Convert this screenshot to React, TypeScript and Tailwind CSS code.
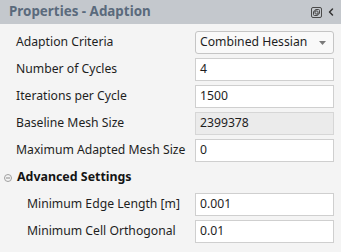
import { ChevronLeft } from "lucide-react";

type Row = { label: string; value: string; kind?: "select" | "disabled"; indent?: boolean };

const mainRows: Row[] = [
  { label: "Adaption Criteria", value: "Combined Hessian", kind: "select" },
  { label: "Number of Cycles", value: "4" },
  { label: "Iterations per Cycle", value: "1500" },
  { label: "Baseline Mesh Size", value: "2399378", kind: "disabled" },
  { label: "Maximum Adapted Mesh Size", value: "0" },
];

const advancedRows: Row[] = [
  { label: "Minimum Edge Length [m]", value: "0.001", indent: true },
  { label: "Minimum Cell Orthogonal", value: "0.01", indent: true },
];

const Field = ({ row }: { row: Row }) => (
  <div className="flex items-center h-[27px]">
    <div className={row.indent ? "pl-[27px] w-[195px]" : "pl-[16px] w-[195px]"}>
      <span className="text-[#1e1e1e]">{row.label}</span>
    </div>
    <div
      className={
        "flex items-center h-[23px] w-[139px] border pl-[4px] pr-[7px] " +
        (row.kind === "select"
          ? "border-[#c5c5c5] bg-[#f9f9f9] rounded-[3px] justify-between"
          : row.kind === "disabled"
          ? "border-[#d6d6d6] bg-[#ebebeb]"
          : "border-[#cfcfcf] bg-white")
      }
    >
      <span className="text-[#1e1e1e]">{row.value}</span>
      {row.kind === "select" && (
        <svg width="7" height="4" viewBox="0 0 7 4">
          <path d="M0 0 H7 L3.5 4 Z" fill="#7a7a7a" />
        </svg>
      )}
    </div>
  </div>
);

export default function App() {
  return (
    <div
      className="w-[341px] h-[252px] bg-[#f4f4f4] text-[12.2px] leading-none overflow-hidden"
      style={{ fontFamily: '"Noto Sans", "Open Sans", sans-serif' }}
    >
      <div className="h-[24px] bg-[#c4c8cd] flex items-center justify-between pl-[9px] pr-[4px]">
        <span className="font-bold text-[13.4px] text-[#5a6a7c]">Properties - Adaption</span>
        <div className="flex items-center gap-[3px]">
          <svg width="11" height="11" viewBox="0 0 11 11">
            <rect x="0.5" y="0.5" width="10" height="10" rx="1.5" fill="none" stroke="#4a4a4a" />
            <rect x="4" y="2.5" width="4.5" height="4.5" rx="1" fill="none" stroke="#4a4a4a" />
            <rect x="2.5" y="4" width="4.5" height="4.5" rx="1" fill="none" stroke="#4a4a4a" />
          </svg>
          <ChevronLeft size={12} strokeWidth={3} className="text-[#333]" />
        </div>
      </div>
      <div className="pt-[5px]">
        {mainRows.map((r) => (
          <Field key={r.label} row={r} />
        ))}
        <div className="flex items-center h-[27px] pl-[4px] gap-[5px]">
          <svg width="8" height="8" viewBox="0 0 8 8">
            <circle cx="4" cy="4" r="3.5" fill="none" stroke="#a0a0a0" />
            <path d="M2 4 H6" stroke="#8a8a8a" />
          </svg>
          <span className="font-bold text-[12.4px] text-[#141414]">Advanced Settings</span>
        </div>
        {advancedRows.map((r) => (
          <Field key={r.label} row={r} />
        ))}
      </div>
    </div>
  );
}
